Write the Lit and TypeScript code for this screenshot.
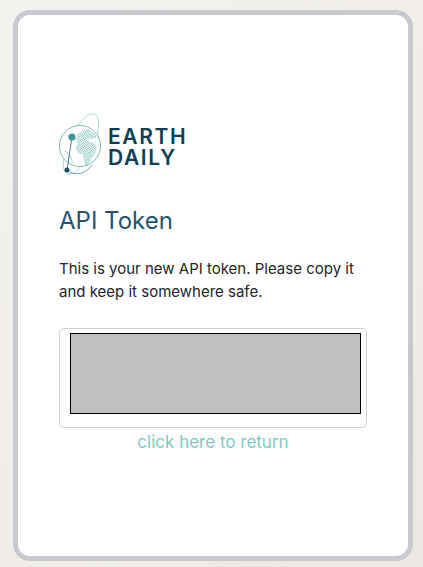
import { LitElement, html, css } from "lit";
import { customElement } from "lit/decorators.js";

@customElement("app-root")
export class AppRoot extends LitElement {
  static styles = css`
    :host {
      display: block;
      height: 567px;
      box-sizing: border-box;
      padding: 10px 10px 6px 13px;
      background: linear-gradient(135deg, #f5f3ef, #ece9e4);
      font-family: Inter, "Liberation Sans", sans-serif;
      overflow: hidden;
    }
    .card {
      box-sizing: border-box;
      height: 551px;
      width: 400px;
      border: 5px solid #c9cad0;
      border-radius: 17px;
      background: #fff;
      padding: 98px 41px 0;
      display: flex;
      flex-direction: column;
    }
    .logo {
      display: flex;
      align-items: center;
      gap: 5px;
      height: 66px;
    }
    .logo svg {
      width: 44px;
      height: 66px;
      flex: none;
    }
    .brand {
      font-family: Inter, "Open Sans", sans-serif;
      font-weight: 600;
      font-size: 21px;
      line-height: 21px;
      letter-spacing: 1.6px;
      color: #0f3f55;
      padding-top: 2px;
    }
    h1 {
      margin: 26px 0 0;
      font-size: 24px;
      line-height: 32px;
      font-weight: 400;
      color: #25536e;
    }
    p {
      margin: 20px 0 0;
      font-size: 15px;
      line-height: 23px;
      color: #22262a;
    }
    .box {
      margin-top: 25px;
      height: 100px;
      box-sizing: border-box;
      border: 1px solid #cfcfcf;
      border-radius: 5px;
      padding: 4px 5px 13px 10px;
    }
    .token {
      height: 100%;
      box-sizing: border-box;
      border: 1px solid #000;
      background: #bfbfbf;
    }
    a {
      display: block;
      text-align: center;
      font-size: 17px;
      line-height: 26px;
      margin-top: 1px;
      color: #7fc9c3;
      text-decoration: none;
    }
  `;

  render() {
    return html`
      <div class="card">
        <div class="logo">
          <svg viewBox="0 0 44 66" fill="none">
            <defs>
              <pattern id="dots" width="1.6" height="1.6" patternUnits="userSpaceOnUse" patternTransform="rotate(30)">
                <rect width="1" height="1" fill="#6fb9b3"></rect>
              </pattern>
            </defs>
            <ellipse cx="22" cy="31" rx="12" ry="33" transform="rotate(25 22 31)" stroke="#a4d3cf" stroke-width="0.8"></ellipse>
            <circle cx="21" cy="33" r="20.5" fill="#fff" fill-opacity="0.85" stroke="#7fbdb9" stroke-width="1"></circle>
            <path d="M17 26 C18 20 23 18 27 16 C32 16 36 20 38 25 C35 26 31 25 28 27 C30 30 34 29 37 31 C39 35 37 41 33 44 C31 48 30 52 27 54 C25 50 25 45 23 41 C19 41 16 37 17 33 C19 31 19 29 17 26 Z" fill="url(#dots)"></path>
            <path d="M6 38 C10 40 12 46 14 50" stroke="#a4d3cf" stroke-width="2" stroke-dasharray="1 1"></path>
            <path d="M13 24 L8 57" stroke="#24586a" stroke-width="0.8"></path>
            <path d="M8 57 C14 63 26 62 33 52" stroke="#4f8895" stroke-width="0.8"></path>
            <circle cx="13" cy="24" r="3.6" fill="#3d9893"></circle>
            <circle cx="8" cy="57" r="2.5" fill="#1f4f62"></circle>
          </svg>
          <div class="brand">EARTH<br />DAILY</div>
        </div>
        <h1>API Token</h1>
        <p>This is your new API token. Please copy it and keep it somewhere safe.</p>
        <div class="box"><div class="token"></div></div>
        <a href="#">click here to return</a>
      </div>
    `;
  }
}
